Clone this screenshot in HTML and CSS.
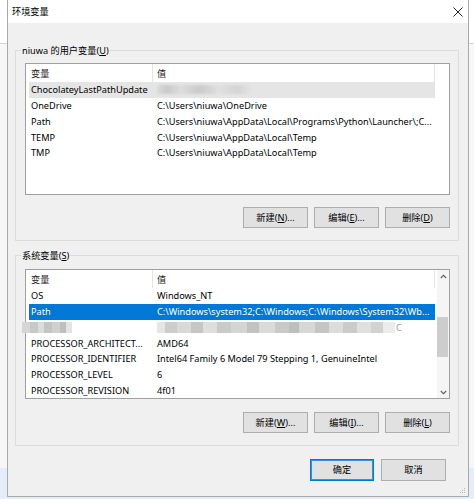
FILE: index.html
```html
<!DOCTYPE html>
<html lang="zh-CN">
<head>
<meta charset="utf-8">
<title>环境变量</title>
<link rel="stylesheet" href="styles.css">
</head>
<body>
<div class="desktop">
  <div class="window">
    <div class="titlebar">
      <span class="title">环境变量</span>
      <svg class="close" width="10" height="10" viewBox="0 0 10 10"><path d="M0.5 0.5 L9.5 9.5 M9.5 0.5 L0.5 9.5" stroke="#222" stroke-width="1" fill="none"/></svg>
    </div>
    <div class="content">
      <fieldset class="group group-user">
        <legend>niuwa 的用户变量(<u>U</u>)</legend>
        <div class="list list-user">
          <div class="header">
            <div class="hcell hname">变量</div>
            <div class="hcell hvalue">值</div>
          </div>
          <div class="row row-hover">
            <div class="cell name">ChocolateyLastPathUpdate</div>
            <div class="cell value"><span class="smudge"></span></div>
          </div>
          <div class="row">
            <div class="cell name">OneDrive</div>
            <div class="cell value">C:\Users\niuwa\OneDrive</div>
          </div>
          <div class="row">
            <div class="cell name">Path</div>
            <div class="cell value">C:\Users\niuwa\AppData\Local\Programs\Python\Launcher\;C...</div>
          </div>
          <div class="row">
            <div class="cell name">TEMP</div>
            <div class="cell value">C:\Users\niuwa\AppData\Local\Temp</div>
          </div>
          <div class="row">
            <div class="cell name">TMP</div>
            <div class="cell value">C:\Users\niuwa\AppData\Local\Temp</div>
          </div>
        </div>
        <div class="buttons">
          <button class="btn">新建(<u>N</u>)...</button>
          <button class="btn">编辑(<u>E</u>)...</button>
          <button class="btn">删除(<u>D</u>)</button>
        </div>
      </fieldset>

      <fieldset class="group group-sys">
        <legend>系统变量(<u>S</u>)</legend>
        <div class="list list-sys">
          <div class="rows">
            <div class="header">
              <div class="hcell hname">变量</div>
              <div class="hcell hvalue">值</div>
            </div>
            <div class="row">
              <div class="cell name">OS</div>
              <div class="cell value">Windows_NT</div>
            </div>
            <div class="row row-selected">
              <div class="cell name">Path</div>
              <div class="cell value">C:\Windows\system32;C:\Windows;C:\Windows\System32\Wb...</div>
            </div>
            <div class="row">
              <div class="cell name"><span class="mosaic mosaic-name"></span></div>
              <div class="cell value"><span class="mosaic mosaic-value"></span><span class="tailc">C</span></div>
            </div>
            <div class="row">
              <div class="cell name">PROCESSOR_ARCHITECT...</div>
              <div class="cell value">AMD64</div>
            </div>
            <div class="row">
              <div class="cell name">PROCESSOR_IDENTIFIER</div>
              <div class="cell value">Intel64 Family 6 Model 79 Stepping 1, GenuineIntel</div>
            </div>
            <div class="row">
              <div class="cell name">PROCESSOR_LEVEL</div>
              <div class="cell value">6</div>
            </div>
            <div class="row">
              <div class="cell name">PROCESSOR_REVISION</div>
              <div class="cell value">4f01</div>
            </div>
          </div>
          <div class="scrollbar">
            <svg class="arrow" width="7" height="5" viewBox="0 0 7 5"><path d="M0.8 4 L3.5 1.3 L6.2 4" stroke="#606060" stroke-width="1.1" fill="none"/></svg>
            <div class="track">
              <div class="thumb"></div>
            </div>
            <svg class="arrow" width="7" height="5" viewBox="0 0 7 5"><path d="M0.8 1 L3.5 3.7 L6.2 1" stroke="#606060" stroke-width="1.1" fill="none"/></svg>
          </div>
        </div>
        <div class="buttons buttons-sys">
          <button class="btn">新建(<u>W</u>)...</button>
          <button class="btn">编辑(<u>I</u>)...</button>
          <button class="btn">删除(<u>L</u>)</button>
        </div>
      </fieldset>

      <div class="footer">
        <button class="btn btn-ok">确定</button>
        <button class="btn btn-cancel">取消</button>
      </div>
      <svg class="grip" width="6" height="6" viewBox="0 0 6 6">
        <rect x="4" y="0" width="1" height="1" fill="#b8b8b8"/>
        <rect x="2" y="2" width="1" height="1" fill="#b8b8b8"/>
        <rect x="4" y="2" width="1" height="1" fill="#b8b8b8"/>
        <rect x="0" y="4" width="1" height="1" fill="#b8b8b8"/>
        <rect x="2" y="4" width="1" height="1" fill="#b8b8b8"/>
        <rect x="4" y="4" width="1" height="1" fill="#b8b8b8"/>
      </svg>
    </div>
  </div>
</div>
</body>
</html>
```

FILE: styles.css
```css
* {
  box-sizing: border-box;
}

html, body {
  margin: 0;
  padding: 0;
}

body {
  width: 474px;
  height: 499px;
  overflow: hidden;
  font-family: "Noto Sans", "Noto Sans CJK SC", sans-serif;
  font-size: 9.2px;
  color: #000;
  background:
    linear-gradient(to bottom,
      #ffffff 0, #ffffff 43px,
      #d4d4d4 43px, #d4d4d4 44px,
      #f7f7f7 44px, #f7f7f7 468px,
      #e4eefa 468px, #e4eefa 499px);
}

.desktop {
  display: flex;
  padding-left: 7px;
}

.window {
  width: 462px;
  height: 497px;
  display: flex;
  flex-direction: column;
  border-left: 1px solid #a9a9a9;
  border-right: 1px solid #a9a9a9;
  border-bottom: 1px solid #a9a9a9;
  background: #f0f0f0;
}

.titlebar {
  height: 23px;
  flex: none;
  background: #ffffff;
  display: flex;
  align-items: center;
  justify-content: space-between;
  padding: 0 5px 0 4px;
}

.title {
  font-size: 9.2px;
  line-height: 12px;
  color: #000;
}

.close {
  display: block;
  margin-right: 0;
}

.content {
  flex: 1;
  position: relative;
  padding: 21px 9px 0 7px;
  display: flex;
  flex-direction: column;
}

.group {
  margin: 0;
  border: 1px solid #dcdcdc;
  padding: 6px 8px 12px 9px;
  min-width: 0;
}

.group legend {
  padding: 0 1px;
  margin-left: -4px;
  line-height: 13px;
  color: #000;
}

.group-sys {
  margin-top: 8px;
  padding-top: 7px;
}

.list {
  background: #ffffff;
  border: 1px solid #a0a0a0;
}

.list-user {
  height: 132px;
}

.list-sys {
  display: flex;
  height: 130px;
}

.rows {
  flex: 1;
  min-width: 0;
}

.header {
  display: flex;
  height: 18px;
  align-items: center;
  width: 409px;
  color: #1e1e1e;
}

.hcell {
  height: 100%;
  display: flex;
  align-items: center;
}

.hname {
  width: 126px;
  padding-left: 5px;
}

.hvalue {
  flex: 1;
  padding-left: 4px;
  border-left: 1px solid #e5e5e5;
  border-right: 1px solid #e5e5e5;
}

.row {
  display: flex;
  height: 15.75px;
  align-items: center;
  margin-left: 3px;
  width: 406px;
  white-space: nowrap;
}

.cell {
  overflow: visible;
  display: flex;
  align-items: center;
}

.name {
  width: 123px;
  flex: none;
  padding-left: 2px;
}

.value {
  flex: 1;
  padding-left: 5px;
  min-width: 0;
}

.row-hover {
  background: #e5e5e5;
}

.row-selected {
  background: #0078d7;
  color: #ffffff;
}

.smudge {
  display: block;
  width: 95px;
  height: 9px;
  border-radius: 4px;
  background: linear-gradient(to right,
    rgba(200,200,200,0.3) 0%, rgba(190,190,190,0.7) 10%,
    rgba(215,215,215,0.6) 25%, rgba(195,195,195,0.8) 45%,
    rgba(220,220,220,0.6) 65%, rgba(205,205,205,0.7) 85%,
    rgba(225,225,225,0.3) 100%);
  filter: blur(1.2px);
}

.mosaic {
  display: block;
  height: 11px;
}

.mosaic-name {
  width: 56px;
  margin-left: -15px;
  background: linear-gradient(to right,
    #f0f0f0 0, #f0f0f0 6px,
    #d6d6d6 6px, #d6d6d6 14px,
    #c8c8c8 14px, #c8c8c8 22px,
    #dcdcdc 22px, #dcdcdc 28px,
    #c4c4c4 28px, #c4c4c4 36px,
    #d0d0d0 36px, #d0d0d0 44px,
    #bfbfbf 44px, #bfbfbf 50px,
    #e4e4e4 50px, #e4e4e4 56px);
}

.mosaic-value {
  width: 238px;
  background: linear-gradient(to right,
    #e6e6e6 0, #e6e6e6 8px,
    #cdcdcd 8px, #cdcdcd 20px,
    #d9d9d9 20px, #d9d9d9 34px,
    #c6c6c6 34px, #c6c6c6 46px,
    #dedede 46px, #dedede 60px,
    #cacaca 60px, #cacaca 74px,
    #d4d4d4 74px, #d4d4d4 90px,
    #c2c2c2 90px, #c2c2c2 102px,
    #dadada 102px, #dadada 118px,
    #c9c9c9 118px, #c9c9c9 132px,
    #bebebe 132px, #bebebe 142px,
    #d7d7d7 142px, #d7d7d7 158px,
    #c5c5c5 158px, #c5c5c5 172px,
    #dcdcdc 172px, #dcdcdc 186px,
    #cbcbcb 186px, #cbcbcb 200px,
    #e0e0e0 200px, #e0e0e0 214px,
    #d2d2d2 214px, #d2d2d2 226px,
    #ececec 226px, #ececec 238px);
}

.tailc {
  margin-left: 1px;
  color: #9a9a9a;
}

.scrollbar {
  width: 12px;
  flex: none;
  display: flex;
  flex-direction: column;
  align-items: center;
  background: #f5f5f5;
  padding: 4px 0 3px;
}

.arrow {
  display: block;
  flex: none;
}

.track {
  flex: 1;
  width: 100%;
  padding-top: 38px;
}

.thumb {
  width: 11px;
  height: 40px;
  margin-left: 0;
  background: #cdcdcd;
}

.buttons {
  display: flex;
  justify-content: flex-end;
  gap: 6px;
  margin-top: 12px;
}

.buttons-sys {
  margin-top: 13px;
}

.btn {
  width: 65px;
  height: 21px;
  padding: 0;
  margin: 0;
  font-family: "Noto Sans", "Noto Sans CJK SC", sans-serif;
  font-size: 9.2px;
  color: #000;
  background: #e1e1e1;
  border: 1px solid #adadad;
  border-radius: 0;
  line-height: 12px;
}

.footer {
  display: flex;
  justify-content: flex-end;
  gap: 7px;
  margin-top: 13px;
  padding-right: 13px;
}

.btn-ok {
  width: 64px;
  height: 22px;
  border: 1px solid #0078d7;
  box-shadow: inset 0 0 0 1px #3c8fd9;
}

.btn-cancel {
  height: 22px;
}

.grip {
  position: absolute;
  right: 2px;
  bottom: 2px;
}
```
